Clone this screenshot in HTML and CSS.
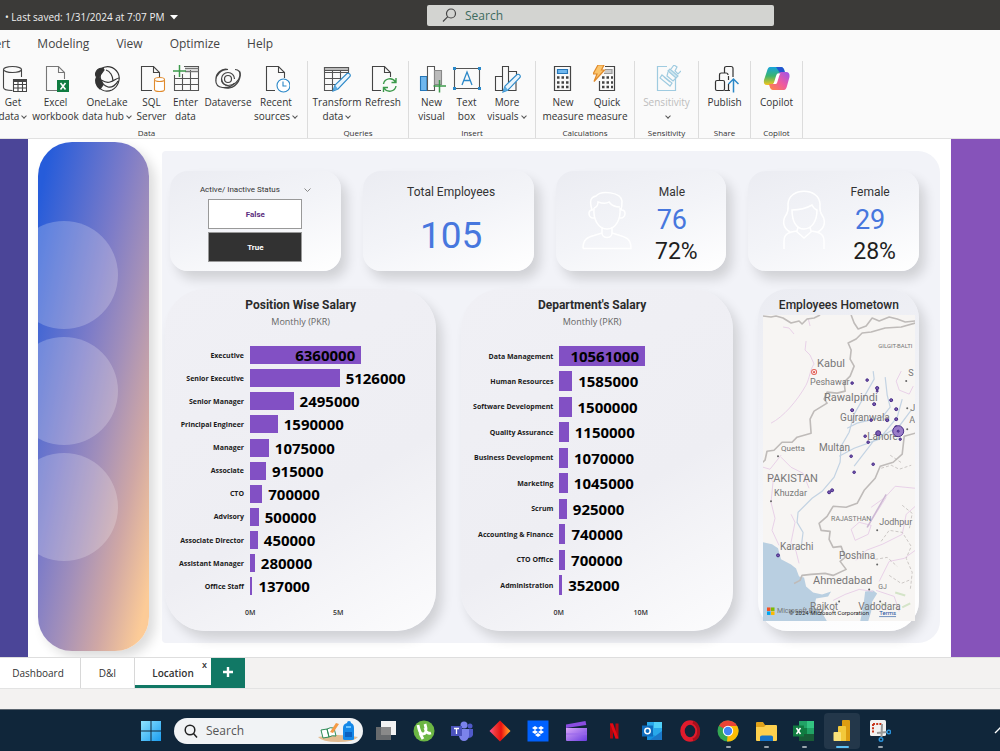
FILE: index.html
```html
<!DOCTYPE html>
<html lang="en">
<head>
<meta charset="utf-8">
<title>Employee report</title>
<link rel="stylesheet" href="styles.css">
</head>
<body>
<header class="titlebar">
  <button class="saved" type="button"><span>• Last saved: 1/31/2024 at 7:07 PM</span><svg width="8" height="5" viewBox="0 0 8 5"><path d="M0 0h8L4 4.500z" fill="#fff"/></svg></button>
  <label class="top-search">
    <svg width="15" height="15" viewBox="0 0 15 15" fill="none" stroke="#444" stroke-width="1.2"><circle cx="9" cy="5.500" r="4.500"/><path d="M5.800 8.700 1 13.500"/></svg>
    <input type="text" placeholder="Search" aria-label="Search commands">
  </label>
</header>

<nav class="menu">
  <button type="button" class="menu-cut">Insert</button>
  <button type="button">Modeling</button>
  <button type="button">View</button>
  <button type="button">Optimize</button>
  <button type="button">Help</button>
</nav>

<section class="ribbon" aria-label="Ribbon">
  <div class="group group-data">
    <div class="tools">
      <button class="tool w38" type="button">
        <svg viewBox="0 0 28 28" fill="none" stroke="#444" stroke-width="1.100"><path d="M4.500 4.500v18c0 2 4 3 9 3M22.500 4.500V12"/><ellipse cx="13.500" cy="4.500" rx="9" ry="3"/><path d="M14.500 14.500h13v12h-13z" fill="#fff"/><path d="M14.500 15.500h13" stroke-width="3"/><path d="M14.500 19.500h13M14.500 23h13M19 15v11.500M23.500 15v11.500"/></svg>
        <span>Get<br>data<i class="chev"></i></span></button>
      <button class="tool w47" type="button">
        <svg viewBox="0 0 28 28" fill="none" stroke="#777" stroke-width="1.100"><path d="M15.500 25.500h-11v-24h12l6 6V14M16.500 1.500v6h6"/><path d="M15 15h12v12H15z" fill="#107c41" stroke="none"/><path d="m18.500 18 5 6.500m0-6.500-5 6.500" stroke="#fff" stroke-width="1.600"/></svg>
        <span>Excel<br>workbook</span></button>
      <button class="tool w56" type="button">
        <svg viewBox="0 0 28 28" fill="none" stroke="#333" stroke-width="1.200"><path d="M10 3C4 3 1 8 3.500 12c-2 4-.5 9 3.500 12l3-4-4-8 5-7z" fill="#333"/><path d="M8 4c5-4 13-3 17 4 3 6 0 14-6 17-5 2-10 1-13-3"/><path d="M10 4C5 10 7 19 15 22c4 1 8-2 10-6M4 13c4 1 8 6 13 4 4-1 7-4 9-4M13 5c4 1 7 6 7 11"/></svg>
        <span>OneLake<br>data hub<i class="chev"></i></span></button>
      <button class="tool w33" type="button">
        <svg viewBox="0 0 28 28" fill="none" stroke="#444" stroke-width="1.100"><path d="M14 25.500H3.500v-24h12l6 6V12M15.500 1.500v6h6"/><path d="M16.500 15v9.500c0 1.500 2 2 5 2s5-.5 5-2V15" fill="#fff" stroke="#e08a2c"/><ellipse cx="21.500" cy="14.500" rx="5" ry="2" fill="#fff" stroke="#e08a2c"/></svg>
        <span>SQL<br>Server</span></button>
      <button class="tool w35" type="button">
        <svg viewBox="0 0 28 28" fill="none" stroke="#555" stroke-width="1.100"><path d="M2.500 10v15.500h24v-24H12M2.500 13.500h24M2.500 19.500h24M10.500 9v16.500M18.500 5v20.500"/><path d="M13 3.500h13.500M13 6.500h13.500" stroke="#777" stroke-width="1.500"/><path d="M7.500 0v12M1 6h13" stroke="#3c9a4b" stroke-width="1.500"/></svg>
        <span>Enter<br>data</span></button>
      <button class="tool w50" type="button">
        <svg viewBox="0 0 28 28" fill="none" stroke="#444" stroke-width="1.200"><circle cx="14" cy="14" r="3.500"/><path d="M20.500 14a6.500 6.500 0 1 0-6.500 6.500c6 0 11-4 12-10 .500-3-1-6-5-6"/><path d="M7.500 14a6.500 6.500 0 0 0 6.500 6.500M14 4.500C7 4.500 2 10 1.800 15.500c0 4 3 6.500 6.500 7 5 .500 9-1 12-4M25.500 6c2.500 7-2 15-10 17-3 .500-5 0-7-.500M2 16C1 8 8 3 14 4.500"/></svg>
        <span>Dataverse</span></button>
      <button class="tool w46" type="button">
        <svg viewBox="0 0 28 28" fill="none" stroke="#444" stroke-width="1.100"><path d="M13 25.500H4.500v-24h12l6 6V13M16.500 1.500v6h6"/><circle cx="21.500" cy="20.500" r="6.500" fill="#fff" stroke="#2b88c8"/><path d="M21 16.500V21h3.500" stroke="#2b88c8"/></svg>
        <span>Recent<br>sources<i class="chev"></i></span></button>
    </div>
    <p>Data</p>
  </div>
  <div class="group tight">
    <div class="tools">
      <button class="tool w50" type="button">
        <svg viewBox="0 0 28 28" fill="none" stroke="#555" stroke-width="1.100"><path d="M1.500 2v23.500H12M25.500 2v6M1.500 7.500h24M1.500 13.500h17M1.500 19.500h12M9.500 5v20M17.500 5v10"/><path d="M1.500 2.500h24v3h-24z" fill="#bbb"/><path d="m10 26 2-6L24 8.500c2-1 4 1 3 3L15 24z" fill="#e8f4fc" stroke="#2b88c8"/><path d="m12 20 3 4-5 2z" fill="#5aaae0" stroke="none"/></svg>
        <span>Transform<br>data<i class="chev"></i></span></button>
      <button class="tool w42" type="button">
        <svg viewBox="0 0 28 28" fill="none" stroke="#444" stroke-width="1.100"><path d="M12 25.500H3.500v-24h12l6 6V12M15.500 1.500v6h6"/><path d="M14.500 19c1-6 9-7 12-2M27 13v4.500h-4.500M27 21c-1 6-9 7-12 2M14.500 27v-4.500H19" stroke="#3c9a4b" stroke-width="1.400"/></svg>
        <span>Refresh</span></button>
    </div>
    <p>Queries</p>
  </div>
  <div class="group snug">
    <div class="tools">
      <button class="tool w35" type="button">
        <svg viewBox="0 0 28 28" fill="none" stroke="#555" stroke-width="1.100"><path d="M2.500 11.500h6.500v14H2.500z" fill="#6fb7ee" stroke="#2576b8"/><path d="M9.500 1.500h7v24h-7z" fill="#fff"/><path d="M16.500 5.500h7v14h-7z" fill="#bbb" stroke="#888"/><path d="M21.500 15v12.500M15.500 21h12.500" stroke="#3c9a4b" stroke-width="1.500"/></svg>
        <span>New<br>visual</span></button>
      <button class="tool w35" type="button">
        <svg viewBox="0 0 28 28" fill="none" stroke="#555" stroke-width="1.100"><path d="M1.500 3.500h25v20h-25z"/><path d="M0 2h3v3H0zM25 2h3v3h-3zM0 22h3v3H0zM25 22h3v3h-3z" fill="#2b88c8" stroke="none"/><path d="m9 20 5-13 5 13M10.800 15.500h6.400" stroke="#2b88c8" stroke-width="1.300"/></svg>
        <span>Text<br>box</span></button>
      <button class="tool w46" type="button">
        <svg viewBox="0 0 28 28" fill="none" stroke="#444" stroke-width="1.100"><path d="M2.500 11.500h7v14h-7zM9.500 25.500v-24h6v20M15.500 6.500h8v4M23 17v8.500h-8"/><path d="m10 27 2-6L24 9.500c2-1 4 1 3 3L15 25z" fill="#e8f4fc" stroke="#2b88c8"/><path d="m12 21 3 4-5 2z" fill="#5aaae0" stroke="none"/></svg>
        <span>More<br>visuals<i class="chev"></i></span></button>
    </div>
    <p>Insert</p>
  </div>
  <div class="group snug">
    <div class="tools">
      <button class="tool w44" type="button">
        <svg viewBox="0 0 28 28" fill="none" stroke="#444" stroke-width="1.200"><path d="M5.500 1.500h16v24h-16z"/><path d="M8.500 4.500h10v4h-10z" fill="#6fb7ee" stroke="#2576b8"/><path d="M8 12.500h12M8 17.500h12M8 22h12" stroke-width="2.500" stroke-dasharray="2.500 2"/></svg>
        <span>New<br>measure</span></button>
      <button class="tool w44" type="button">
        <svg viewBox="0 0 28 28" fill="none" stroke="#444" stroke-width="1.200"><path d="M6.500 16v9.500h15v-24H12"/><path d="M12 4.500h7v4h-8" fill="#ccc" stroke="#999"/><path d="M9 12.500h11M9 17.500h11M9 22h11" stroke-width="2.500" stroke-dasharray="2.500 2"/><path d="M5 0h6L8.500 5h3L1 16.500 4 9H0z" fill="#fbc56d" stroke="#e08a2c"/></svg>
        <span>Quick<br>measure</span></button>
    </div>
    <p>Calculations</p>
  </div>
  <div class="group">
    <div class="tools">
      <button class="tool w47 off" type="button" disabled>
        <svg viewBox="0 0 28 28" fill="none" stroke="#9fcbe0" stroke-width="1.200"><path d="M14 1.500H4.500v24h18V14"/><path d="m9 10 10 8-2 3-10-8zM11 12l6 5"/><path d="m15 6 2-2 8 7-2 2z" fill="#cfe6f0"/><path d="m18 4 3-4 3 2-2 4 3 3 3-3M15 7l-1 4 6 5 3-3"/></svg>
        <span>Sensitivity<br><i class="chev"></i></span></button>
    </div>
    <p>Sensitivity</p>
  </div>
  <div class="group">
    <div class="tools">
      <button class="tool w35" type="button">
        <svg viewBox="0 0 28 28" fill="none" stroke="#333" stroke-width="1.200"><rect x="4.500" y="15.500" width="9" height="10" rx="1.500"/><path d="M8.500 15V10q0-2 2-2H15q2 0 2 2M13.500 8V3.500q0-2 2-2H20q2 0 2 2V12M13.500 25.500H19M17.500 11v4M17.500 19v6"/><path d="M22.500 27.500V15M17.500 19l5-5 5 5" stroke="#2b88c8" stroke-width="1.500"/></svg>
        <span>Publish</span></button>
    </div>
    <p>Share</p>
  </div>
  <div class="group">
    <div class="tools">
      <button class="tool w35" type="button">
        <svg viewBox="0 0 28 28"><defs>
          <linearGradient id="cp1" x1="0" y1="0" x2="0" y2="1"><stop offset="0" stop-color="#16a4dc"/><stop offset=".5" stop-color="#3cb46e"/><stop offset="1" stop-color="#f6c51c"/></linearGradient>
          <linearGradient id="cp2" x1="1" y1="0" x2="0" y2="1"><stop offset="0" stop-color="#9a55ee"/><stop offset=".5" stop-color="#ef5aa0"/><stop offset="1" stop-color="#ff8a3c"/></linearGradient></defs>
          <path d="M7 2h11q2.500 0 3.500 4l.5 2h-5q-2 0-3 3l-2 6q-1 3-3 3H4q-4 0-3-5l3-9q1-4 3-4z" fill="url(#cp1)"/>
          <path d="M13 2h5q2.500 0 3.500 4l.5 2h-5z" fill="#2455d0"/>
          <path d="M21 25H10q-2.500 0-3.500-4l-.5-2h4q2 0 3-3l2-6q1-3 3-3h5q4 0 3.500 5l-2.500 9q-1 4-3 4z" fill="url(#cp2)"/>
          <path d="M14.500 8.500h3q-1 1-1.500 3l-1.500 5q-.5 2-1.500 2.500h-3q1-1 1.500-3l1.500-5q.5-2 1.500-2.500z" fill="#fff"/></svg>
        <span>Copilot</span></button>
    </div>
    <p>Copilot</p>
  </div>
</section>

<main class="canvas">
  <div class="page">
    <aside class="rail"><i></i><i></i><i></i></aside>
    <div class="panel">
      <div class="kpis">
        <section class="card slicer">
          <button class="slicer-head" type="button">Active/ Inactive Status<svg width="7" height="4" viewBox="0 0 7 4" fill="none" stroke="#888"><path d="m.5.5 3 3 3-3"/></svg></button>
          <button class="choice" type="button">False</button>
          <button class="choice on" type="button" aria-pressed="true">True</button>
        </section>
        <section class="card total"><h2>Total Employees</h2><strong>105</strong></section>
        <section class="card person">
          <svg viewBox="0 0 50 60" fill="none" stroke="#fff" stroke-width="1.500"><path d="M1 58.500h48c0-9-4-11-11-13l-8-2.500v-6M20 37v6l-8 2.500C5 47 1 50 1 58.500M20 43c0 6 10 6 10 0M10 20c-3-10-1-13 4-14 5-6 25-4 26 5 0 3 0 6-1 9M12 18c3-1 4-4 4-6 3 1 8 2 11 0 3 4 6 5 11 5M12 18c-1 11 4 21 13 21s14-10 13-21M11 20c-6-1-5 9 1 8M39 20c6-1 5 9-1 8"/></svg>
          <div><h2>Male</h2><strong>76</strong><b>72%</b></div>
        </section>
        <section class="card person female">
          <svg viewBox="0 0 50 60" fill="none" stroke="#fff" stroke-width="1.500"><path d="M5 59V51c0-8 6-9 13-10l1-4M45 59V51c0-8-6-9-13-10l-1-4M17 41l8 7 8-7M11 42c-7-4-8-11-4-17 3-4 2-7 2-11C10-3 40-3 41 14c0 4-1 7 2 11 4 6 3 13-4 17M13 20c0 11 4 19 12 19s13-8 13-19c-3-1-4-3-5-5-5 3-12 5-20 5z"/></svg>
          <div><h2>Female</h2><strong>29</strong><b>28%</b></div>
        </section>
      </div>
      <div class="charts">
        <section class="card chart">
          <h3>Position Wise Salary</h3><p>Monthly (PKR)</p>
          <ol class="bars">
            <li><span>Executive</span><div><i class="in" style="width:59.7%"><b>6360000</b></i></div></li>
            <li><span>Senior Executive</span><div><i style="width:48.1%"></i><b>5126000</b></div></li>
            <li><span>Senior Manager</span><div><i style="width:23.4%"></i><b>2495000</b></div></li>
            <li><span>Principal Engineer</span><div><i style="width:14.9%"></i><b>1590000</b></div></li>
            <li><span>Manager</span><div><i style="width:10.1%"></i><b>1075000</b></div></li>
            <li><span>Associate</span><div><i style="width:8.6%"></i><b>915000</b></div></li>
            <li><span>CTO</span><div><i style="width:6.6%"></i><b>700000</b></div></li>
            <li><span>Advisory</span><div><i style="width:4.7%"></i><b>500000</b></div></li>
            <li><span>Associate Director</span><div><i style="width:4.2%"></i><b>450000</b></div></li>
            <li><span>Assistant Manager</span><div><i style="width:2.6%"></i><b>280000</b></div></li>
            <li><span>Office Staff</span><div><i style="width:1.3%"></i><b>137000</b></div></li>
          </ol>
          <div class="axis"><span>0M</span><span>5M</span></div>
        </section>
        <section class="card chart dept">
          <h3>Department's Salary</h3><p>Monthly (PKR)</p>
          <ol class="bars">
            <li><span>Data Management</span><div><i class="in" style="width:49.4%"><b>10561000</b></i></div></li>
            <li><span>Human Resources</span><div><i style="width:7.4%"></i><b>1585000</b></div></li>
            <li><span>Software Development</span><div><i style="width:7%"></i><b>1500000</b></div></li>
            <li><span>Quality Assurance</span><div><i style="width:5.4%"></i><b>1150000</b></div></li>
            <li><span>Business Development</span><div><i style="width:5%"></i><b>1070000</b></div></li>
            <li><span>Marketing</span><div><i style="width:4.9%"></i><b>1045000</b></div></li>
            <li><span>Scrum</span><div><i style="width:4.3%"></i><b>925000</b></div></li>
            <li><span>Accounting &amp; Finance</span><div><i style="width:3.5%"></i><b>740000</b></div></li>
            <li><span>CTO Office</span><div><i style="width:3.3%"></i><b>700000</b></div></li>
            <li><span>Administration</span><div><i style="width:1.6%"></i><b>352000</b></div></li>
          </ol>
          <div class="axis"><span>0M</span><span>10M</span></div>
        </section>
        <section class="card hometown">
          <h3>Employees Hometown</h3>
          <svg class="map" viewBox="0 0 152 306" role="img" aria-label="Employees hometown map">
            <path fill="#f7f5f3" d="M0 0h152v306H0z"/>
            <path fill="#b9cfe1" d="M0 227l9 2 6 4 3 11 10 5 5 4 3 8 5 1 2 9 7 6 9 2 9-3-3 5-12 2-2 8 9 8 4 7H0zM102 276l8-1 4 3-5 8-1 10-3 10h-8l3-14z"/>
            <g fill="none" stroke="#c3d3e3" stroke-width="1.200"><path d="M110 56l1 8-12 21-8 14-5 18-8 14-1 16-6 15-12 14-10 7-14 14-1 10 6 10-2 16M122 62l2 18 3 12-8 10-25 6-10 5M139 84l-5 18-18 22-25 9-15 8M148 95l-12 16-25 14-20 26"/></g>
            <g fill="none" stroke="#e6cde6" stroke-width=".9"><path d="M8 108c12-6 26-22 35-38 4-8 4-16 8-21l-4-9-5-5 1-9M20 12l6 1 5 6M45 3l2 8M18 140l-11 14-7-2M5 158l5 9-2 20 4 16-3 12 7 15M18 142l10 10 12 6 6 15M36 248l-3-12-5-9 4-20-4-8M108 192l14-10 10-11 20 2M88 214l8-7 12 3-3 9-13 6zM104 212l19-30M113 275l18 6 5 15M93 245l10-10 16-6 20-10 4-20 9-8M138 56l-5 10 3 9 10 4 4-8M116 266l10-20 15-3 11-8M70 285l12-6 14-5 14 2"/></g>
            <path d="M104 212l19-33" fill="none" stroke="#cdb9d3" stroke-width="1.500"/>
            <g fill="none" stroke="#bfbbb9" stroke-width="1.600" stroke-linejoin="round"><path d="M0 1l8 1 5-1 7 2 8 5 8-2 3 3 5-5 7-1 6-3M88 0l3 8 4 6 8-3 6-8 7 3 10-4 8 2 8 3 10-1M152 8l-14 4-16 1-14 4-9 1-6 6-8 4 3 7-1 9 4 7-4 10-6 6 1 9-8 2-10-1-3 7 3 4-13 8-4 8 1 14-14 4-5 5-10 0-8 8-7 1-2 9-7 6-1 7M152 118l-11 3-2 18-9 8-13 4-5 12-11 12-7 13-11 4-13-1-6 10-8 7 2 7 9 1-1 8 4 8 8-1 4 11-5 4 6 8-13 6-8-2-14 1-9 1-2 5-6 3"/></g>
            <g fill="none" stroke="#bab4b1" stroke-width=".7" stroke-dasharray="3 2"><path d="M118 153l10-3 8 4 12-4M118 226l8-11 13 2 9 14-5 12 6 14-2 18M112 244l12-2 10 9M126 260l12 8 10-4M127 140l12 8M139 190l10 8-3 16"/></g>
            <g stroke="#d4e4c8" stroke-width="2"><path d="M132 277l10 3M118 288l6 3M139 292l8-4"/></g>
            <g class="place">
              <text x="54" y="52" font-size="11">Kabul</text><text x="47" y="70" font-size="9">Peshawar</text>
              <text x="61" y="86" font-size="11">Rawalpindi</text><text x="77" y="106" font-size="10">Gujranwala</text>
              <text x="104" y="125" font-size="10">Lahore</text><text x="56" y="136" font-size="10">Multan</text>
              <text x="18" y="136" font-size="8">Quetta</text><text x="115" y="33" font-size="6">GILGIT-BALTI</text>
              <text x="145" y="61" font-size="9">S</text><text x="147" y="96" font-size="9">J</text><text x="146" y="108" font-size="9">A</text>
              <text x="4" y="167" font-size="11">PAKISTAN</text><text x="11" y="181" font-size="9">Khuzdar</text>
              <text x="68" y="206" font-size="7">RAJASTHAN</text><text x="116" y="210" font-size="9">Jodhpur</text>
              <text x="17" y="235" font-size="10">Karachi</text><text x="76" y="244" font-size="10">Poshina</text>
              <text x="50" y="269" font-size="11">Ahmedabad</text><text x="115" y="274" font-size="7">GJ</text>
              <text x="47" y="295" font-size="10">Rajkot</text><text x="95" y="295" font-size="10">Vadodara</text>
              <text x="14" y="298" font-size="7">Microsoft Bing</text>
            </g>
            <g fill="#666"><circle cx="15" cy="141" r="1"/><circle cx="8" cy="186" r="1"/><circle cx="143" cy="66" r="1"/><circle cx="144" cy="93" r="1"/><circle cx="144" cy="114" r="1"/><circle cx="114" cy="215" r="1"/><circle cx="114" cy="249" r="1"/><circle cx="106" cy="274" r="1"/><circle cx="76" cy="286" r="1"/><circle cx="117" cy="286" r="1"/></g>
            <circle cx="51" cy="57" r="2.500" fill="#fff" stroke="#e26158"/><circle cx="51" cy="57" r="1.200" fill="#e26158"/>
            <g fill="#7a5bb0" stroke="#3d2380" stroke-width=".9"><circle cx="89" cy="68" r="1.300"/><circle cx="104" cy="65" r="1.300"/><circle cx="114" cy="73" r="1.600"/><circle cx="114" cy="76" r="1"/><circle cx="128" cy="85" r="1.500"/><circle cx="111" cy="89" r="1.500"/><circle cx="89" cy="95" r="1.500"/><circle cx="133" cy="94" r="1.500"/><circle cx="133" cy="104" r="1.500"/><circle cx="108" cy="105" r="1.300"/><circle cx="124" cy="105" r="1.500"/><circle cx="133" cy="112" r="1.500"/><circle cx="102" cy="121" r="1.300"/><circle cx="105" cy="127" r="1.300"/><circle cx="115" cy="118" r="2.500"/><circle cx="135" cy="116" r="5.500" fill="#9a7cc8"/><circle cx="135" cy="116" r="1"/><circle cx="137" cy="124" r="1.200"/><circle cx="88" cy="141" r="1.300"/><circle cx="110" cy="149" r="1.300"/><circle cx="91" cy="157" r="1.300"/><circle cx="69" cy="175" r="1.500"/><circle cx="66" cy="177" r="1.500"/><circle cx="15" cy="240" r="1.500"/></g>
            <path fill="#f25022" d="M4 292h3.500v3.500H4z"/><path fill="#7fba00" d="M8 292h3.500v3.500H8z"/><path fill="#00a4ef" d="M4 296h3.500v3.500H4z"/><path fill="#ffb900" d="M8 296h3.500v3.500H8z"/>
            <text class="credit" x="26" y="300" font-size="6">© 2024 Microsoft Corporation</text>
            <a href="#terms"><text class="terms" x="116" y="300" font-size="6">Terms</text></a>
          </svg>
        </section>
      </div>
    </div>
  </div>
</main>

<nav class="pages" aria-label="Report pages">
  <button type="button" class="p81">Dashboard</button>
  <button type="button" class="p54">D&amp;I</button>
  <button type="button" class="current">Location<span class="close">x</span></button>
  <button type="button" class="add" aria-label="New page"><svg width="10" height="10" viewBox="0 0 10 10"><path d="M5 0v10M0 5h10" stroke="#fff" stroke-width="2.400"/></svg></button>
</nav>

<footer class="taskbar">
  <button class="app" type="button" aria-label="Start"><svg viewBox="0 0 22 22"><defs><linearGradient id="win" x1="0" y1="0" x2="1" y2="1"><stop offset="0" stop-color="#8fe3ff"/><stop offset="1" stop-color="#1a9df0"/></linearGradient></defs><path fill="url(#win)" d="M1 1h9.500v9.500H1zM11.500 1H21v9.500h-9.500zM1 11.500h9.500V21H1zM11.500 11.500H21V21h-9.500z"/></svg></button>
  <label class="task-search">
    <svg width="14" height="14" viewBox="0 0 14 14" fill="none" stroke="#222" stroke-width="1.500"><circle cx="6" cy="6" r="4.800"/><path d="m9.500 9.500 3.500 4"/></svg>
    <input type="text" placeholder="Search" aria-label="Search Windows">
    <svg width="40" height="22" viewBox="0 0 40 22"><path d="M0 17q20-4 40 0-4 5-20 5T0 17z" fill="#e3bd92"/><path d="m3 10 6-1 2 8-6 1zM9 9q3-2 7-1l2 8q-4-1-7 1z" fill="#fff" stroke="#2e8b57"/><path d="m12 12 6-9 3 1-6 9z" fill="#f59a45"/><path d="M25 8q0-4 4-5 0-2 2-2t2 2q3 1 3 5v11q0 1-2 1h-7q-2 0-2-1z" fill="#1488e8"/><path d="M27 12h7v5h-7z" fill="#0a60c0"/><path d="M28 7h5" stroke="#6bc3ff" stroke-width="2"/></svg>
  </label>
  <div class="apps">
    <button class="app" type="button" aria-label="Task view"><svg viewBox="0 0 22 22"><path d="M6 1h15v14H6z" fill="#f2f2f2"/><path d="M1 7h15v13H1z" fill="#777" opacity=".85"/></svg></button>
    <button class="app" type="button" aria-label="uTorrent"><svg viewBox="0 0 22 22"><circle cx="11" cy="11" r="10.500" fill="#6cb644"/><path d="M5 5c1 5 2 9 5 9s4-4 2-10m0 4c1 4 3 6 6 5M7 13c1 3 2 4 3 6" fill="none" stroke="#fff" stroke-width="2.800"/></svg></button>
    <button class="app" type="button" aria-label="Teams"><svg viewBox="0 0 22 22"><circle cx="19" cy="6" r="2.500" fill="#5059c9"/><circle cx="13" cy="5" r="3.500" fill="#7b83eb"/><path d="M16 9h6v6q-1 3-5 3z" fill="#5059c9"/><path d="M8 9h10v7q-1 5-5 5t-5-5z" fill="#7b83eb"/><path d="M0 6h11v10H0z" fill="#4b53bc"/><path d="M3 8.500h5M5.500 8.500V14" stroke="#fff" stroke-width="1.300"/></svg></button>
    <button class="app" type="button" aria-label="Diamond"><svg viewBox="0 0 22 22"><defs><linearGradient id="dia"><stop offset="0" stop-color="#ff4f9a"/><stop offset=".25" stop-color="#f03a3a"/><stop offset=".55" stop-color="#e81010"/><stop offset=".75" stop-color="#ff5a1c"/><stop offset="1" stop-color="#ffb02e"/></linearGradient></defs><path d="m11 .500 10.500 10.500L11 21.500.500 11z" fill="url(#dia)"/></svg></button>
    <button class="app" type="button" aria-label="Dropbox"><svg viewBox="0 0 22 22"><path d="M.500.500h21v21H.500z" fill="#0061fe"/><path d="m8 6 3 2-3 2-3-2zM14 6l3 2-3 2-3-2zM8 10l3 2-3 2-3-2zM14 10l3 2-3 2-3-2zM11 13l3 2-3 2-3-2z" fill="#fff"/></svg></button>
    <button class="app" type="button" aria-label="Clipchamp"><svg viewBox="0 0 22 22"><defs><linearGradient id="clip" x1="0" y1="0" x2="1" y2="1"><stop offset="0" stop-color="#d9a5f8"/><stop offset="1" stop-color="#6a3de0"/></linearGradient></defs><path d="M1 8h21v12q0 1-1 1H2q-1 0-1-1z" fill="url(#clip)"/><path d="M1 4.500 20.500 1l.8 4L1 8z" fill="#8a4ce0"/><path d="M1 14h21" stroke="#9a68ec"/></svg></button>
    <button class="app" type="button" aria-label="Netflix"><svg viewBox="0 0 22 22"><path d="M7 3.500h3v15H7zM12.500 3.500h3v15h-3z" fill="#b1060f"/><path d="M7 3.500h3l5.500 15h-3z" fill="#e50914"/></svg></button>
    <button class="app" type="button" aria-label="Outlook"><svg viewBox="0 0 22 22"><path d="M6 2h15v18H6z" fill="#28a8ea"/><path d="M13 2h8v6h-8z" fill="#50d0f8"/><path d="m6 11 15 9H6z" fill="#1490df"/><path d="m21 11-12 9h12z" fill="#1b78c8"/><path d="M1 5.500h11v11H1z" fill="#0f6cbd"/><circle cx="6.500" cy="11" r="2.700" fill="none" stroke="#fff" stroke-width="1.500"/></svg></button>
    <button class="app" type="button" aria-label="Opera"><svg viewBox="0 0 22 22"><ellipse cx="11" cy="11" rx="7.500" ry="8.500" fill="none" stroke="#e01b2c" stroke-width="4.500"/><path d="M14 2c7 3 8 15 0 18" fill="none" stroke="#a8101c" stroke-width="3"/></svg></button>
    <button class="app run" type="button" aria-label="Chrome"><svg viewBox="0 0 22 22"><circle cx="11" cy="11" r="10.500" fill="#34a853"/><path d="M11 11 2 5.700A10.500 10.500 0 0 1 20.200 6z" fill="#ea4335"/><path d="M20.200 6H11v5l-1 10.400A10.500 10.500 0 0 0 20.200 6z" fill="#fbbc05"/><circle cx="11" cy="11" r="5.200" fill="#fff"/><circle cx="11" cy="11" r="4.200" fill="#4285f4"/></svg></button>
    <button class="app run" type="button" aria-label="File Explorer"><svg viewBox="0 0 22 22"><path d="M1 3q0-1 1-1h6l2 3h11v7H1z" fill="#e0a21b"/><path d="M1 7h8l2-2h10q1 0 1 1v14q0 1-1 1H2q-1 0-1-1z" fill="#fdd04e"/><path d="M5 21v-4q0-1.500 2-1.500h9q2 0 2 1.500v4z" fill="#1573c8"/></svg></button>
    <button class="app run" type="button" aria-label="Excel"><svg viewBox="0 0 22 22"><path d="M6 1h8v7H6z" fill="#21a366"/><path d="M14 1h7v7h-7z" fill="#33c481"/><path d="M6 8h15v6H6z" fill="#107c41"/><path d="M6 14h15v7H6z" fill="#185c37"/><path d="M14 8h7v6h-7z" fill="#21a366"/><path d="M0 5.500h11v11H0z" fill="#107c41"/><path d="m3.500 8 4 6m0-6-4 6" stroke="#fff" stroke-width="1.500"/></svg></button>
    <button class="app run active" type="button" aria-label="Power BI"><svg viewBox="0 0 22 22"><path d="M11 1q0-1 1-1h6q1 0 1 1v20h-8z" fill="#dd9d12"/><path d="M7 7q0-1 1-1h6q1 0 1 1v14H7z" fill="#f3c83a"/><path d="M2.500 13q0-1 1-1H9q1 0 1 1v8H3q-.5 0-.5-1z" fill="#f9e27a"/></svg></button>
    <button class="app run" type="button" aria-label="Snipping Tool"><svg viewBox="0 0 22 22"><rect x="1" y="0" width="16" height="16" rx="1.500" fill="#f1f1f1"/><path d="M4 4h8.500M4 4v8.500" stroke="#c8381f" stroke-width="2" stroke-dasharray="2 1.200" fill="none"/><path d="m13 4-.5 13M18 12 8 13" stroke="#999" stroke-width="2"/><circle cx="12" cy="19.500" r="1.800" fill="none" stroke="#2a93dc" stroke-width="1.400"/><circle cx="19.800" cy="12" r="1.800" fill="none" stroke="#2a93dc" stroke-width="1.400"/></svg></button>
  </div>
  <button class="tray" type="button" aria-label="Show hidden icons"><svg width="12" height="7" viewBox="0 0 12 7" fill="none" stroke="#fff" stroke-width="1.400"><path d="m1 6 5-5 5 5"/></svg></button>
</footer>
</body>
</html>
```
FILE: styles.css
```css
* { box-sizing: border-box; }
body {
  margin: 0;
  min-height: 100vh;
  display: flex;
  flex-direction: column;
  overflow-x: hidden;
  background: #f3f2f1;
  font-family: "Open Sans", "Noto Sans", sans-serif;
  color: #333;
}
button, input { font: inherit; color: inherit; border: 0; padding: 0; background: none; }
h2, h3, p, ol { margin: 0; padding: 0; }
i { font-style: normal; }

.titlebar {
  display: grid;
  grid-template-columns: 427fr 347fr 226fr;
  align-items: center;
  height: 30px;
  background: #3b3a38;
}
.saved { display: flex; align-items: center; gap: 6px; padding: 4px 0 0 5px; color: #f0f0f0; font-size: 10px; line-height: 16px; white-space: nowrap; }
.top-search { display: flex; align-items: center; gap: 8px; height: 21px; padding-left: 15px; border-radius: 2px; background: #d3d4d1; font-size: 12px; }
.top-search input { flex: 1; min-width: 0; }
.top-search input::placeholder { color: #3e6b60; opacity: 1; }

.menu { display: flex; gap: 27px; height: 28px; padding-bottom: 1px; background: #fafafa; font-size: 12px; color: #444; }
.menu-cut { margin-left: -22px; }

.ribbon { display: flex; height: 81px; padding-top: 3px; margin-left: -11px; background: #fafafa; border-bottom: 1px solid #e1e1e1; }
.group { display: flex; flex-direction: column; justify-content: space-between; padding: 4px 8px 0; border-right: 1px solid #dcdcdc; }
.group-data { padding-left: 5px; }
.tight { padding: 4px 4px 0; }
.snug { padding: 4px 5px 0; }
.group p { text-align: center; font-size: 8px; line-height: 10px; }
.tools { display: flex; justify-content: center; }
.tool { display: flex; flex-direction: column; align-items: center; gap: 2px; font-size: 10px; line-height: 14px; white-space: nowrap; }
.tool svg { width: 28px; height: 28px; }
.w33 { width: 33px; } .w35 { width: 35px; } .w38 { width: 38px; } .w42 { width: 42px; } .w44 { width: 44px; }
.w46 { width: 46px; } .w47 { width: 47px; } .w50 { width: 50px; } .w56 { width: 56px; }
.off { color: #bdbdbd; }
.chev { display: inline-block; width: 4px; height: 4px; margin: 0 1px 2px 3px; border: solid #555; border-width: 0 1px 1px 0; transform: rotate(45deg); }

.canvas {
  flex: 1;
  display: flex;
  padding: 0 49px 0 28px;
  background: linear-gradient(90deg, #4b4598 50%, #8653ba 50%);
}
.page { flex: 1; display: flex; gap: 13px; padding: 3px 11px 6px 10px; background: #fff; min-width: 0; }
.rail {
  flex: 0 0 111px;
  display: flex;
  flex-direction: column;
  gap: 8px;
  padding-top: 79px;
  overflow: hidden;
  border-radius: 34px;
  background: linear-gradient(to bottom right, #265cda 6%, #7d7cc8 42%, #a28fba 58%, #cfa7a5 76%, #fccb97 94%);
  box-shadow: 6px 6px 12px rgba(0, 0, 0, .14);
}
.rail i { width: 108px; height: 108px; margin-left: -28px; border-radius: 50%; background: rgba(255, 255, 255, .22); }
.panel { flex: 1; min-width: 0; display: flex; flex-direction: column; gap: 18px; margin: 9px 0 8px; padding: 20px 21px 12px 3px; border-radius: 4px 22px 22px 4px; background: #f2f3f8; }
.kpis { display: grid; grid-template-columns: repeat(4, 1fr); gap: 22px; padding-left: 5px; }
.charts { flex: 1; display: grid; grid-template-columns: 271fr 271fr 161fr; gap: 25px; }
.card {
  min-width: 0;
  border-radius: 18px;
  background: linear-gradient(160deg, #ebecf2, #f3f4f8 50%, #fff);
  box-shadow: 6px 8px 12px rgba(0, 0, 0, .14);
}
.kpis .card { height: 100px; font-family: Roboto, sans-serif; }
.kpis h2 { font-size: 12px; font-weight: 400; line-height: 16px; }
.kpis strong { font-weight: 400; color: #4777de; }

.slicer { display: flex; flex-direction: column; align-items: center; gap: 3px; padding-top: 13px; }
.slicer-head { display: flex; align-items: center; gap: 24px; font-size: 8px; line-height: 12px; white-space: nowrap; }
.choice { width: 94px; height: 30px; border: 1px solid #999; background: #fff; color: #5b2d7e; font-size: 8px; font-weight: 700; }
.choice.on { background: #323232; color: #fff; }

.total { display: flex; flex-direction: column; align-items: center; gap: 14px; padding: 13px 0 0 6px; }
.total strong { font-size: 37px; line-height: 44px; }

.person { display: flex; padding: 13px 14px 0 26px; }
.female { padding: 13px 8px 0 31px; }
.person svg { width: 50px; height: 60px; margin-top: 6px; }
.person div { flex: 1; display: flex; flex-direction: column; align-items: center; }
.person strong { font-size: 27px; line-height: 40px; }
.person b { padding-left: 9px; color: #1e1e1e; font-size: 23px; font-weight: 400; line-height: 24px; }

.charts .card { border-radius: 40px; }
.charts h3 { font: 500 12px/16px Roboto, sans-serif; text-align: center; color: #2b2b2b; white-space: nowrap; }
.chart { display: flex; flex-direction: column; padding: 8px 0 10px; background: linear-gradient(150deg, #f0f0f5, #eeeef3 60%, #fcfcfd); }
.chart > p { font-size: 9px; line-height: 18px; text-align: center; color: #666; }
.chart h3 { font-weight: 700; }
.dept h3, .dept > p { padding-right: 10px; }
.bars { flex: 1; display: flex; flex-direction: column; justify-content: space-between; padding: 15px 0 10px; list-style: none; }
.bars li { display: grid; grid-template-columns: 79px 1fr; gap: 6px; align-items: center; }
.bars span { text-align: right; font-size: 7px; font-weight: 700; color: #1a1a1a; white-space: nowrap; }
.bars div { display: flex; align-items: center; gap: 6px; height: 18px; }
.bars div > i { height: 100%; background: #8250c4; }
.bars b { color: #000; font-size: 15px; line-height: 18px; }
.bars .in { display: flex; align-items: center; justify-content: flex-end; padding-right: 6px; }
.dept .bars div { height: 20px; }
.dept .bars li { grid-template-columns: 92px 1fr; }
.axis { display: grid; grid-template-columns: 88px 1fr; padding-left: 80px; font-size: 7px; font-weight: 600; line-height: 16px; }
.dept .axis { grid-template-columns: 80px 1fr; padding-left: 92px; }

.charts .hometown { display: flex; flex-direction: column; gap: 2px; padding: 8px 4px 10px 5px; border-radius: 30px; background: linear-gradient(160deg, #ebecf2, #f3f4f8 50%, #fff); }
.map { display: block; width: 100%; height: auto; }
.map text { font-family: Roboto, sans-serif; }
.place { fill: #777; }
.credit { fill: #222; }
.terms { fill: #1c4f9c; text-decoration: underline; }

.pages { display: flex; align-items: stretch; height: 32px; border-top: 1px solid #dedede; border-bottom: 1px solid #e3e3e3; margin-bottom: 20px; background: #f3f2f1; font-size: 10px; }
.pages button { background: #fff; border-right: 1px solid #d8d8d8; }
.p81 { width: 81px; padding-right: 4px; } .p54 { width: 54px; }
.pages .current { position: relative; width: 76px; border: 0; border-bottom: 3px solid #117865; font-weight: 600; padding-top: 3px; }
.close { position: absolute; top: 0; right: 4px; font-size: 9px; line-height: 14px; }
.pages .add { width: 34px; border: 0; background: #117865; }

.taskbar { display: flex; align-items: center; height: 42px; padding-left: 133px; border-top: 1px solid #5b6670; background: #10263a; }
.app { position: relative; display: grid; place-items: center; width: 36px; height: 36px; border-radius: 4px; }
.app svg { width: 22px; height: 22px; }
.task-search { display: flex; align-items: center; gap: 8px; width: 189px; height: 26px; margin: 0 5px; padding: 0 5px 0 10px; border-radius: 13px; background: #f1f3f5; font-size: 12px; }
.task-search input { flex: 1; min-width: 0; }
.task-search input::placeholder { color: #555; opacity: 1; }
.apps { flex: 1; display: flex; gap: 2px; }
.run::after { content: ""; position: absolute; bottom: 1px; width: 5px; height: 2px; border-radius: 1px; background: #9aa4ad; }
.active { background: #23374a; }
.active::after { width: 13px; background: #5cc0f5; }
.tray { width: 6px; overflow: hidden; }
.tray svg { display: block; }
```
